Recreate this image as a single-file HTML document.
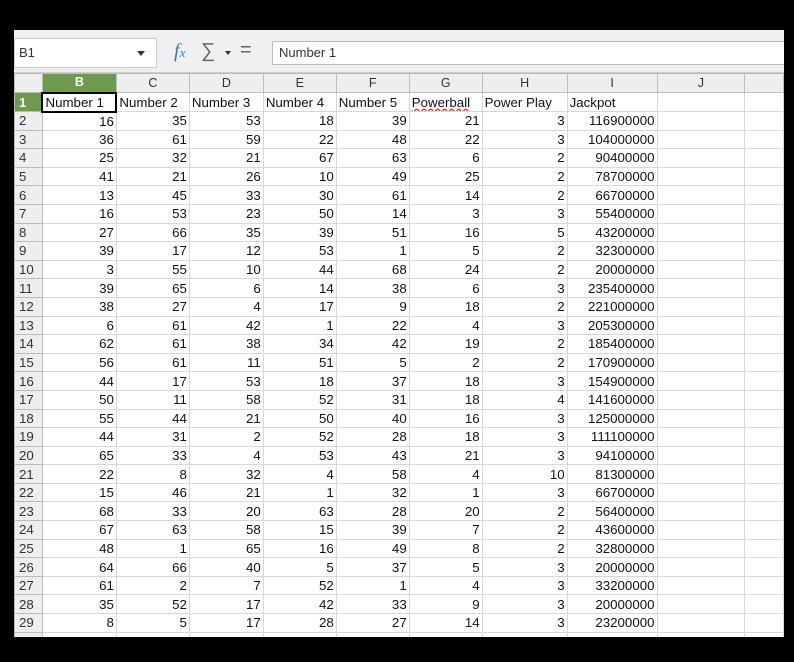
<!DOCTYPE html><html><head><style>
body{margin:0;width:794px;height:662px;background:#000;overflow:hidden;font-family:"Liberation Sans",sans-serif;}
#w{position:absolute;left:14px;top:30px;width:770px;height:607px;background:#fff;overflow:hidden}
.tb{position:absolute;left:0;top:0;width:770px;height:42px;background:#f0f0f0;border-bottom:1px solid #ccc}
.nb{position:absolute;left:0;top:8px;width:143px;height:30px;background:#fff;border:1px solid #ccc;box-sizing:border-box;font-size:13px;line-height:28px;padding-left:4px;color:#333}
.fi{position:absolute;left:258px;top:11px;width:520px;height:24px;background:#fff;border:1px solid #bbb;box-sizing:border-box;font-size:13px;line-height:22px;padding-left:6px;color:#333}
table{position:absolute;left:0;top:43px;border-collapse:collapse;table-layout:fixed;font-size:13.3px}
td{border:1px solid #d8d8d8;height:18.6px;padding:0 2px;text-align:right;white-space:nowrap;overflow:hidden;color:#111;line-height:17px;box-sizing:border-box}
tr.h td{background:#eee;text-align:center;color:#333;border-color:#bbb;font-size:12.5px;height:19px}
td.r{background:#eee;text-align:left;color:#333;border-color:#bbb;padding-left:4px}
</style></head><body><div id="w">
<div class="tb"><div class="nb">B1</div>
<div style="position:absolute;left:123px;top:21px;border:4px solid transparent;border-top:5px solid #333"></div>
<div style="position:absolute;left:160px;top:10px;font-size:20px;color:#3a7ac0;font-style:italic;font-family:'Liberation Serif',serif">f<span style="font-size:13px">x</span></div>
<div style="position:absolute;left:187px;top:10px;font-size:20px;color:#666">∑</div>
<div style="position:absolute;left:211px;top:21px;border:3px solid transparent;border-top:4px solid #333"></div>
<div style="position:absolute;left:226px;top:9px;font-size:20px;color:#666">=</div>
<div class="fi">Number 1</div></div>
<table id="t">
<colgroup><col style="width:28px"><col style="width:74px"><col style="width:73px"><col style="width:74px"><col style="width:73px"><col style="width:73px"><col style="width:73px"><col style="width:85px"><col style="width:90px"><col style="width:88px"><col style="width:39px"></colgroup>
<tr class="h"><td></td><td style="background:#6f9a4e;color:#fff;font-weight:bold">B</td><td>C</td><td>D</td><td>E</td><td>F</td><td>G</td><td>H</td><td>I</td><td>J</td><td></td></tr>
</table>
</div>
<script>
var d=[[16,35,53,18,39,21,3,116900000],[36,61,59,22,48,22,3,104000000],[25,32,21,67,63,6,2,90400000],[41,21,26,10,49,25,2,78700000],[13,45,33,30,61,14,2,66700000],[16,53,23,50,14,3,3,55400000],[27,66,35,39,51,16,5,43200000],[39,17,12,53,1,5,2,32300000],[3,55,10,44,68,24,2,20000000],[39,65,6,14,38,6,3,235400000],[38,27,4,17,9,18,2,221000000],[6,61,42,1,22,4,3,205300000],[62,61,38,34,42,19,2,185400000],[56,61,11,51,5,2,2,170900000],[44,17,53,18,37,18,3,154900000],[50,11,58,52,31,18,4,141600000],[55,44,21,50,40,16,3,125000000],[44,31,2,52,28,18,3,111100000],[65,33,4,53,43,21,3,94100000],[22,8,32,4,58,4,10,81300000],[15,46,21,1,32,1,3,66700000],[68,33,20,63,28,20,2,56400000],[67,63,58,15,39,7,2,43600000],[48,1,65,16,49,8,2,32800000],[64,66,40,5,37,5,3,20000000],[61,2,7,52,1,4,3,33200000],[35,52,17,42,33,9,3,20000000],[8,5,17,28,27,14,3,23200000],[59,66,40,28,38,26,3,73100000]];
var t=document.getElementById('t'),h='<tr><td class="r" style="background:#6f9a4e;color:#fff;font-weight:bold">1</td><td style="text-align:left;border:2px solid #000">Number 1</td><td style="text-align:left">Number 2</td><td style="text-align:left">Number 3</td><td style="text-align:left">Number 4</td><td style="text-align:left">Number 5</td><td style="text-align:left;text-decoration:underline wavy #d33">Powerball</td><td style="text-align:left">Power Play</td><td style="text-align:left">Jackpot</td><td></td><td></td></tr>';
d.forEach(function(r,i){h+='<tr><td class="r">'+(i+2)+'</td>';r.forEach(function(v){h+='<td>'+v+'</td>'});h+='<td></td><td></td></tr>'});
t.insertAdjacentHTML('beforeend',h);
</script>
</body></html>
